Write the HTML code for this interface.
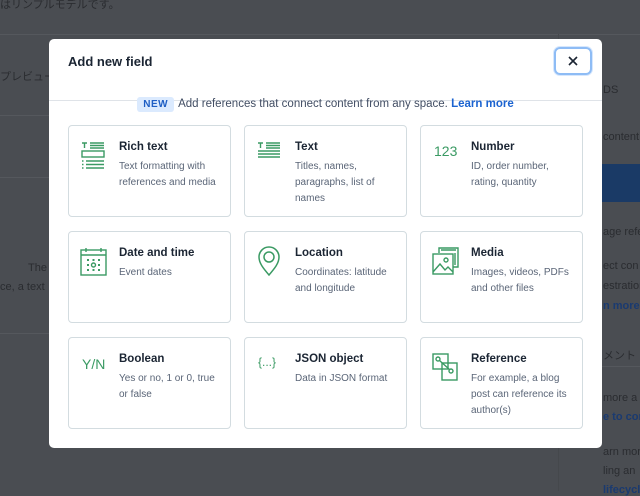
<!DOCTYPE html>
<html style="background:#4a4d52"><head><meta charset="utf-8"><style>
*{box-sizing:border-box;margin:0;padding:0}
body{width:640px;height:491px;overflow:hidden;background:#4a4d52;font-family:"Liberation Sans","Noto Sans CJK JP",sans-serif;position:relative}
.bg{position:absolute;color:#2a2c30;font-size:11px;white-space:nowrap}
.line{position:absolute;height:1px;background:#55585d}
.modal{position:absolute;left:49px;top:39px;width:553px;height:409px;background:#fff;border-radius:5px}
.hdr{height:62px;border-bottom:1px solid #dfe3e8;position:relative}
.hdr h1{position:absolute;left:19px;top:15px;font-size:13px;font-weight:bold;color:#1b2533}
.close{position:absolute;left:505px;top:8px;width:38px;height:28px;border:2px solid #8ebcf5;border-radius:6px;box-shadow:0 0 0 1px #d6e7fd}
.note{position:absolute;top:58px;left:0;width:553px;text-align:center;font-size:11.5px;color:#414d63;white-space:nowrap}
.new{display:inline-block;background:#dbeafe;color:#1e5ec4;font-weight:bold;font-size:10px;letter-spacing:.5px;padding:2px 6px;border-radius:3px;margin-right:4px}
.note a{color:#1b63d0;font-weight:bold;text-decoration:none}
.card{position:absolute;width:163px;height:92px;border:1px solid #d3dce0;border-radius:4px}
.card .ic{position:absolute;left:11px;top:14px;width:28px;height:30px}
.card h3{position:absolute;left:50px;top:15px;font-size:11.5px;font-weight:bold;color:#1b2533}
.card p{position:absolute;left:50px;top:33px;width:104px;font-size:10px;line-height:16px;color:#5a6577}
.g{color:#3a9a63;font-size:14px;position:absolute;left:13px;top:17px}
</style></head><body>
<div class="bg" style="left:0;top:-4px">はリンプルモデルです。</div>
<div class="line" style="left:0;top:34px;width:640px"></div>
<div class="bg" style="left:0;top:68px">プレビュー</div>
<div class="line" style="left:0;top:115px;width:50px"></div>
<div class="line" style="left:0;top:177px;width:50px"></div>
<div class="bg" style="left:28px;top:262px">The</div>
<div class="bg" style="left:0;top:281px">ce, a text</div>
<div class="line" style="left:0;top:333px;width:50px"></div>
<div style="position:absolute;left:558px;top:34px;width:1px;height:457px;background:#45484c"></div>
<div class="bg" style="left:603px;top:84px">DS</div>
<div class="bg" style="left:603px;top:131px">content</div>
<div style="position:absolute;left:602px;top:164px;width:38px;height:38px;background:#1a3a66"></div>
<div class="bg" style="left:603px;top:226px">age refe</div>
<div class="bg" style="left:603px;top:260px">ect con</div>
<div class="bg" style="left:603px;top:280px">estration</div>
<div class="bg" style="left:603px;top:300px;color:#1a3a70;font-weight:bold">n more</div>
<div class="bg" style="left:603px;top:347px">メント</div>
<div class="line" style="left:602px;top:366px;width:38px"></div>
<div class="bg" style="left:603px;top:392px">more a</div>
<div class="bg" style="left:603px;top:411px;color:#1a3a70;font-weight:bold">e to con</div>
<div class="bg" style="left:603px;top:446px">arn mor</div>
<div class="bg" style="left:603px;top:465px">ling an</div>
<div class="bg" style="left:603px;top:484px;color:#1a3a70;font-weight:bold">lifecycl</div>

<div class="modal">
<div class="hdr"><h1>Add new field</h1>
<div class="close"><svg width="34" height="24" viewBox="0 0 34 24"><path d="M13 8l8 8M21 8l-8 8" stroke="#1b2533" stroke-width="1.6"/></svg></div></div>
<div class="note"><span class="new">NEW</span>Add references that connect content from any space. <a>Learn more</a></div>

<div class="card" style="left:19px;top:86px"><svg class="ic" viewBox="0 0 28 30" fill="none" stroke="#3a9a63" stroke-width="1.4"><path d="M2 3h5M4.5 3v5M10 3h14M10 5.5h14M10 8h14"/><rect x="2" y="11" width="22" height="6"/><path d="M2 21h1.5M2 24.5h1.5M2 28h1.5M6 21h18M6 24.5h18M6 28h18"/></svg><h3>Rich text</h3><p>Text formatting with references and media</p></div>
<div class="card" style="left:195px;top:86px"><svg class="ic" viewBox="0 0 28 30" fill="none" stroke="#3a9a63" stroke-width="1.4"><path d="M2 3h5M4.5 3v5M10 3h14M10 5.5h14M10 8h14M2 11h22M2 14h22M2 17h22"/></svg><h3>Text</h3><p>Titles, names, paragraphs, list of names</p></div>
<div class="card" style="left:371px;top:86px"><span class="g">123</span><h3>Number</h3><p>ID, order number, rating, quantity</p></div>

<div class="card" style="left:19px;top:192px"><svg class="ic" viewBox="0 0 28 30" fill="none" stroke="#3a9a63" stroke-width="1.4"><rect x="1" y="4" width="25" height="25"/><path d="M1 9h25M6 2v4M21 2v4"/><g stroke-width="2"><path d="M7 14h2M12.5 14h2M18 14h2M7 19h2M18 19h2M7 24h2M12.5 24h2M18 24h2"/></g><circle cx="13.5" cy="19" r="2"/></svg><h3>Date and time</h3><p>Event dates</p></div>
<div class="card" style="left:195px;top:192px"><svg class="ic" viewBox="0 0 28 30" fill="none" stroke="#3a9a63" stroke-width="1.5"><path d="M13 29C7 22 3 17 3 11a10 10 0 0 1 20 0c0 6-4 11-10 18z"/><circle cx="13" cy="11" r="5"/></svg><h3>Location</h3><p>Coordinates: latitude and longitude</p></div>
<div class="card" style="left:371px;top:192px"><svg class="ic" viewBox="0 0 28 30" fill="none" stroke="#3a9a63" stroke-width="1.4"><path d="M7 7V2h19v19h-5M9 4h15M23 7v12"/><rect x="1" y="8" width="20" height="20"/><path d="M1 26l7-8 5 6 3-3 5 5"/><circle cx="14" cy="14" r="2"/></svg><h3>Media</h3><p>Images, videos, PDFs and other files</p></div>

<div class="card" style="left:19px;top:298px"><span class="g" style="top:18px">Y/N</span><h3>Boolean</h3><p style="width:98px">Yes or no, 1 or 0, true or false</p></div>
<div class="card" style="left:195px;top:298px"><span class="g" style="font-size:12px;top:17px">{...}</span><h3>JSON object</h3><p>Data in JSON format</p></div>
<div class="card" style="left:371px;top:298px"><svg class="ic" viewBox="0 0 28 30" fill="none" stroke="#3a9a63" stroke-width="1.4"><rect x="1" y="2" width="15" height="15"/><rect x="10" y="11" width="15" height="17"/><circle cx="6" cy="7" r="2"/><circle cx="19" cy="19" r="2"/><path d="M7.5 8.5l10 9"/></svg><h3>Reference</h3><p>For example, a blog post can reference its author(s)</p></div>
</div>
</body></html>
